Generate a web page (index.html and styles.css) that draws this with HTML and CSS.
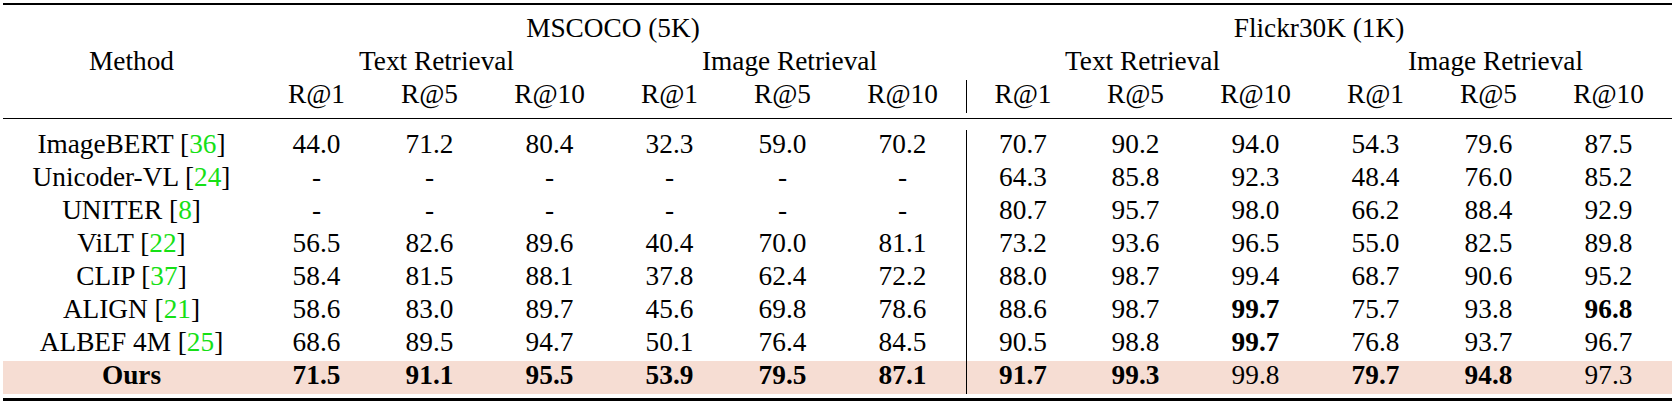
FILE: index.html
```html
<!DOCTYPE html>
<html lang="en">
<head>
    <meta charset="UTF-8">
    <title>Retrieval Results</title>

    <link rel="stylesheet" href="styles.css">
</head>
<body>
<table class="results">
  <colgroup>
    <col class="col-method">
    <col class="col-a"><col class="col-a"><col class="col-b">
    <col class="col-a"><col class="col-a"><col class="col-b">
    <col class="col-a"><col class="col-a"><col class="col-b">
    <col class="col-a"><col class="col-a"><col class="col-b">
  </colgroup>
  <thead>
    <tr class="gap is--top"><td colspan="13"></td></tr>
    <tr>
      <th></th>
      <th colspan="6">MSCOCO (5K)</th>
      <th colspan="6">Flickr30K (1K)</th>
    </tr>
    <tr>
      <th>Method</th>
      <th colspan="3">Text Retrieval</th>
      <th colspan="3">Image Retrieval</th>
      <th colspan="3">Text Retrieval</th>
      <th colspan="3">Image Retrieval</th>
    </tr>
    <tr>
      <th></th>
      <th>R@1</th><th>R@5</th><th>R@10</th>
      <th>R@1</th><th>R@5</th><th>R@10</th>
      <th class="split">R@1</th><th>R@5</th><th>R@10</th>
      <th>R@1</th><th>R@5</th><th>R@10</th>
    </tr>
    <tr class="gap is--rule"><td colspan="13"></td></tr>
    <tr class="gap is--below"><td colspan="13"></td></tr>
  </thead>
  <tbody>
    <tr>
      <td>ImageBERT [<span class="cite">36</span>]</td>
      <td>44.0</td><td>71.2</td><td>80.4</td><td>32.3</td><td>59.0</td><td>70.2</td>
      <td class="split">70.7</td><td>90.2</td><td>94.0</td><td>54.3</td><td>79.6</td><td>87.5</td>
    </tr>
    <tr>
      <td>Unicoder-VL [<span class="cite">24</span>]</td>
      <td>-</td><td>-</td><td>-</td><td>-</td><td>-</td><td>-</td>
      <td class="split">64.3</td><td>85.8</td><td>92.3</td><td>48.4</td><td>76.0</td><td>85.2</td>
    </tr>
    <tr>
      <td>UNITER [<span class="cite">8</span>]</td>
      <td>-</td><td>-</td><td>-</td><td>-</td><td>-</td><td>-</td>
      <td class="split">80.7</td><td>95.7</td><td>98.0</td><td>66.2</td><td>88.4</td><td>92.9</td>
    </tr>
    <tr>
      <td>ViLT [<span class="cite">22</span>]</td>
      <td>56.5</td><td>82.6</td><td>89.6</td><td>40.4</td><td>70.0</td><td>81.1</td>
      <td class="split">73.2</td><td>93.6</td><td>96.5</td><td>55.0</td><td>82.5</td><td>89.8</td>
    </tr>
    <tr>
      <td>CLIP [<span class="cite">37</span>]</td>
      <td>58.4</td><td>81.5</td><td>88.1</td><td>37.8</td><td>62.4</td><td>72.2</td>
      <td class="split">88.0</td><td>98.7</td><td>99.4</td><td>68.7</td><td>90.6</td><td>95.2</td>
    </tr>
    <tr>
      <td>ALIGN [<span class="cite">21</span>]</td>
      <td>58.6</td><td>83.0</td><td>89.7</td><td>45.6</td><td>69.8</td><td>78.6</td>
      <td class="split">88.6</td><td>98.7</td><td class="best">99.7</td><td>75.7</td><td>93.8</td><td class="best">96.8</td>
    </tr>
    <tr>
      <td>ALBEF 4M [<span class="cite">25</span>]</td>
      <td>68.6</td><td>89.5</td><td>94.7</td><td>50.1</td><td>76.4</td><td>84.5</td>
      <td class="split">90.5</td><td>98.8</td><td class="best">99.7</td><td>76.8</td><td>93.7</td><td>96.7</td>
    </tr>
    <tr class="ours">
      <td class="best">Ours</td>
      <td class="best">71.5</td><td class="best">91.1</td><td class="best">95.5</td>
      <td class="best">53.9</td><td class="best">79.5</td><td class="best">87.1</td>
      <td class="split best">91.7</td><td class="best">99.3</td><td>99.8</td>
      <td class="best">79.7</td><td class="best">94.8</td><td>97.3</td>
    </tr>
    <tr class="gap is--end"><td colspan="13"></td></tr>
  </tbody>
</table>
</body>
</html>
```

FILE: styles.css
```css
body {
  margin: 0;
  padding: 3px 0 0 3px;
  background: white;
  font-family: "Liberation Serif", "Times New Roman", serif;
  font-size: 27.3px;
  color: black;
}

.results {
  width: 1669px;
  table-layout: fixed;
  border-collapse: separate;
  border-spacing: 0;
  border-top: solid black 2px;
  border-bottom: solid black 3px;
}

.col-method {
  width: 257px;
}

.col-a {
  width: 113px;
}

.col-b {
  width: 127px;
}

.results th,
.results td {
  height: 28px;
  padding: 0 0 5px 0;
  line-height: 28px;
  font-weight: normal;
  text-align: center;
  white-space: nowrap;
}

.results .split {
  border-left: solid black 1px;
}

.results .best {
  font-weight: bold;
}

.cite {
  color: #16e016;
}

.ours td {
  background-color: #f6ddd3;
}

/* spacer rows between rules */
.results .gap td {
  height: 0;
  padding: 0;
  line-height: 0;
  font-size: 0;
}

.results .gap.is--top td {
  height: 9px;
}

.results .gap.is--rule td {
  height: 5px;
  border-bottom: solid black 1px;
}

.results .gap.is--below td {
  height: 11px;
}

.results .gap.is--end td {
  height: 4px;
}
```
